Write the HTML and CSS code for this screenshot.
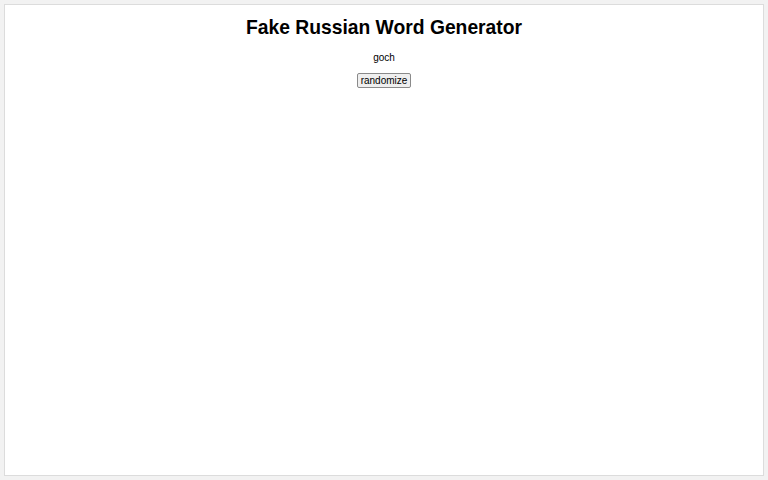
FILE: index.html
```html
<!DOCTYPE html>
<html>
<head>
<meta charset="utf-8">
<link rel="stylesheet" href="styles.css">
</head>
<body>
<main class="card">
  <h1 class="title">Fake Russian Word Generator</h1>
  <p class="word">goch</p>
  <button class="btn">randomize</button>
</main>
</body>
</html>
```
FILE: styles.css
```css
html, body { margin: 0; padding: 0; }
body {
  background: #f2f2f2;
  font-family: "Liberation Sans", Arial, sans-serif;
  padding: 4px;
  height: 480px;
  box-sizing: border-box;
}
.card {
  background: #fff;
  border: 1px solid #dcdcdc;
  height: 100%;
  box-sizing: border-box;
  display: flex;
  flex-direction: column;
  align-items: center;
  padding-top: 11px;
}
.title {
  margin: 0;
  font-size: 19.3px;
  font-weight: bold;
  color: #000;
  line-height: 24px;
}
.word {
  margin: 12px 0 0;
  font-size: 10px;
  line-height: 12px;
  color: #000;
}
.btn {
  margin-top: 9px;
  font-family: "Liberation Sans", Arial, sans-serif;
  font-size: 10px;
  line-height: 13px;
  padding: 0 3px;
  background: #efefef;
  border: 1px solid #8a8a8a;
  border-radius: 2px;
  color: #000;
}
```
